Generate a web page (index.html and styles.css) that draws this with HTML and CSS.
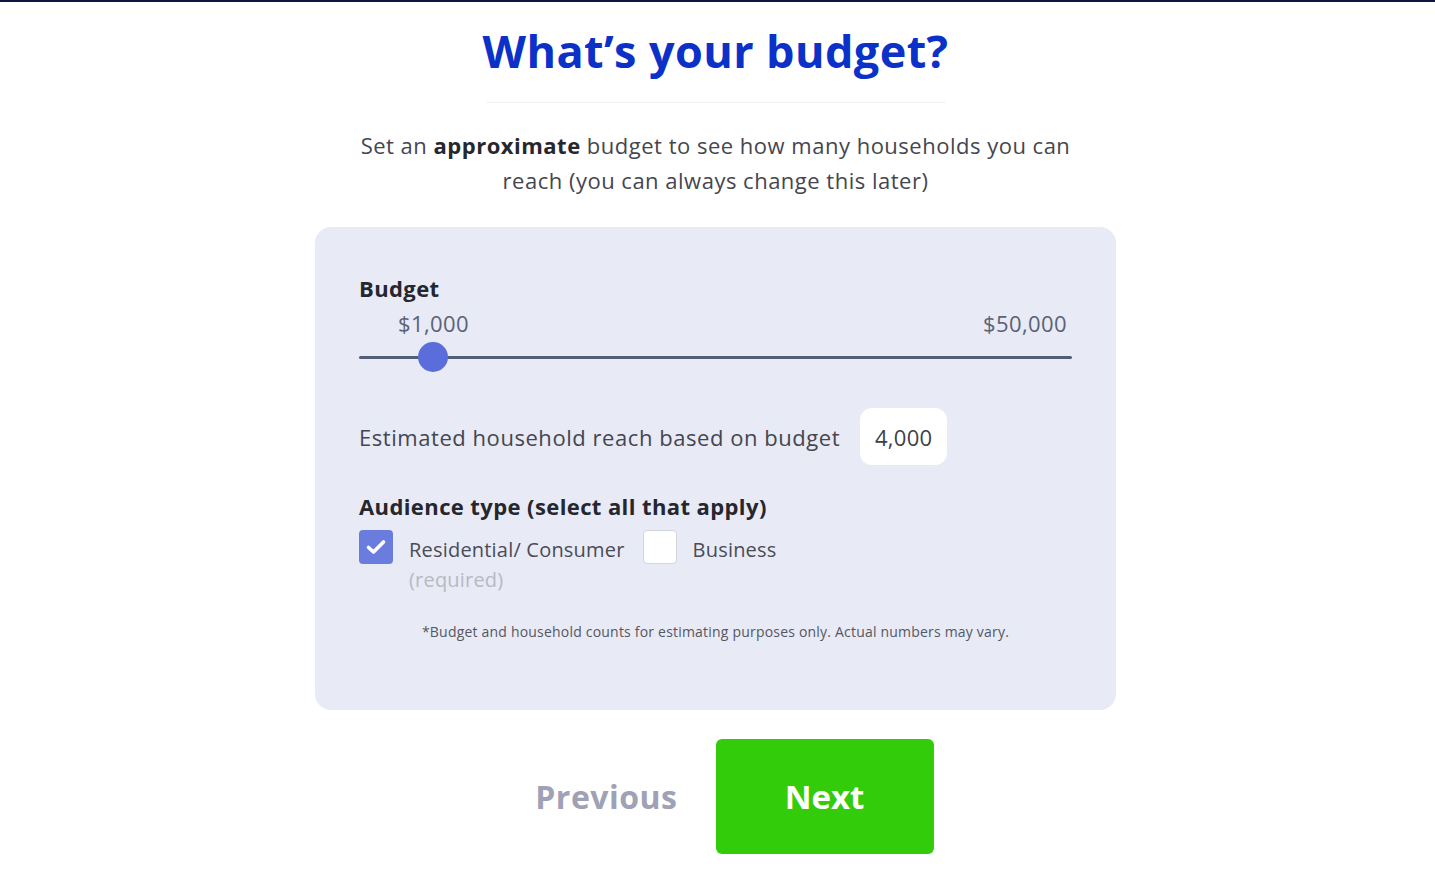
FILE: index.html
```html
<!DOCTYPE html>
<html>
<head>
<meta charset="utf-8">
<link rel="stylesheet" href="styles.css">
</head>
<body>
<div class="topbar"></div>
<main class="page">
  <h1 class="title">What’s your budget?</h1>
  <div class="divider"></div>
  <p class="intro">Set an <strong>approximate</strong> budget to see how many households you can reach (you can always change this later)</p>
  <section class="card">
    <div class="label">Budget</div>
    <div class="range-labels"><span>$1,000</span><span>$50,000</span></div>
    <div class="slider"><div class="track"></div><div class="thumb"></div></div>
    <div class="reach">
      <span>Estimated household reach based on budget</span>
      <div class="reach-box">4,000</div>
    </div>
    <div class="label aud">Audience type (select all that apply)</div>
    <div class="options">
      <div class="option">
        <div class="box checked"><svg width="34" height="34" viewBox="0 0 34 34"><path d="M9.5 17.5 L14.5 22 L24.5 12" fill="none" stroke="#fff" stroke-width="3.6" stroke-linecap="round" stroke-linejoin="round"/></svg></div>
        <div class="opt-text"><span>Residential/ Consumer</span><span class="req">(required)</span></div>
      </div>
      <div class="option">
        <div class="box"></div>
        <div class="opt-text"><span>Business</span></div>
      </div>
    </div>
    <p class="note">*Budget and household counts for estimating purposes only. Actual numbers may vary.</p>
  </section>
  <div class="nav">
    <div class="nav-left"><button class="prev">Previous</button></div>
    <div class="nav-right"><button class="next">Next</button></div>
  </div>
</main>
</body>
</html>
```
FILE: styles.css
```css
* { box-sizing: border-box; }
html, body { margin: 0; padding: 0; background: #fff; }
body { font-family: "Open Sans", "Noto Sans", sans-serif; color: #3d3f4a; }
.topbar { height: 2px; background: #0d1440; }
.page { display: flex; flex-direction: column; align-items: center; padding-right: 4px; }
.title { margin: 22px 0 0; font-size: 45px; font-weight: 700; color: #0b31c9; line-height: 54px; letter-spacing: 0.4px; }
.divider { width: 460px; height: 1px; background: #f1f2f4; margin-top: 24px; }
.intro { width: 730px; margin: 25px 0 0; text-align: center; font-size: 22px; line-height: 35px; color: #45464f; font-weight: 400; letter-spacing: 0.5px; }
.intro strong { color: #26272e; font-weight: 700; }
.card { width: 801px; margin-top: 29px; background: #e8eaf6; border-radius: 16px; padding: 44px 44px 69px; display: flex; flex-direction: column; }
.label { font-size: 22px; font-weight: 700; color: #25262e; line-height: 30px; margin-top: 2px; letter-spacing: 0.4px; }
.range-labels { display: flex; justify-content: space-between; padding: 0 5px 0 39px; font-size: 22px; color: #5b6276; line-height: 30px; margin-top: 5px; letter-spacing: 0.4px; }
.slider { position: relative; height: 30px; margin-top: 4px; display: flex; align-items: center; }
.track { width: 100%; height: 3px; background: #555e79; border-radius: 2px; }
.thumb { position: absolute; left: 59px; top: 0; width: 30px; height: 30px; border-radius: 50%; background: #5a6ddb; }
.reach { display: flex; align-items: center; gap: 20px; margin-top: 36px; font-size: 22px; color: #45464f; letter-spacing: 0.55px; }
.reach-box { width: 87px; height: 57px; background: #fff; border-radius: 12px; display: flex; align-items: center; justify-content: center; color: #3d3f4a; letter-spacing: 0.3px; }
.aud { margin-top: 26px; }
.options { display: flex; gap: 18px; margin-top: 9px; }
.option { display: flex; gap: 16px; align-items: flex-start; }
.box { width: 34px; height: 34px; border-radius: 4px; background: #fff; border: 1px solid #d3d5dd; flex: none; }
.box.checked { background: #6a7ddf; border: none; display: flex; }
.opt-text { display: flex; flex-direction: column; font-size: 20px; color: #4a4c56; line-height: 30px; padding-top: 5px; letter-spacing: 0.2px; }
.req { color: #b7b9c3; }
.note { margin: 27px 0 0; text-align: center; font-size: 14px; color: #555762; letter-spacing: 0.2px; }
.nav { width: 801px; display: grid; grid-template-columns: 1fr 1fr; align-items: center; margin-top: 29px; }
.nav-left { display: flex; justify-content: flex-end; padding-right: 38px; }
.nav-right { display: flex; }
button { font-family: inherit; border: none; cursor: pointer; }
.prev { background: none; font-size: 32px; font-weight: 700; color: #9fa1b6; padding: 0; letter-spacing: 0.5px; }
.next { width: 218px; height: 115px; background: #33cc0a; color: #fff; border-radius: 6px; font-size: 33px; font-weight: 700; }
```
